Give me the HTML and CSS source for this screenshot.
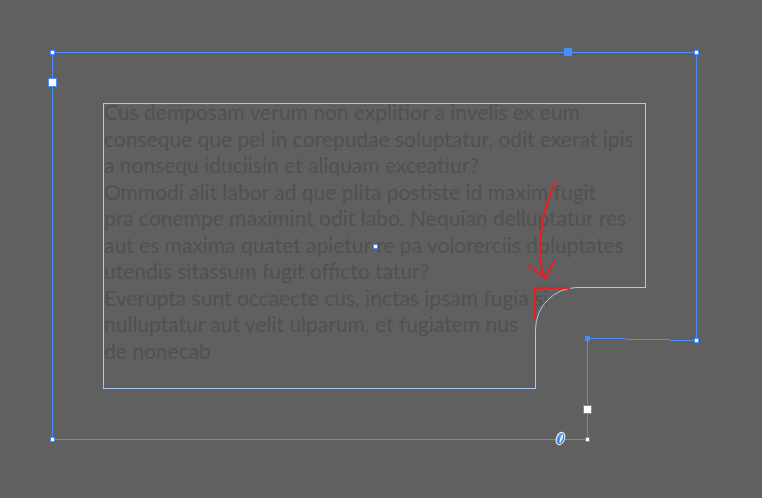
FILE: index.html
```html
<!DOCTYPE html>
<html>
<head>
<meta charset="utf-8">
<link rel="stylesheet" href="styles.css">
</head>
<body>
<div class="canvas">
  <div class="frame-text">
    <span class="ln">Cus demposam verum non explitior a invelis ex eum</span>
    <span class="ln">conseque que pel in corepudae soluptatur, odit exerat ipis</span>
    <span class="ln">a nonsequ iduciisin et aliquam exceatiur?</span>
    <span class="ln">Ommodi alit labor ad que plita postiste id maxim fugit</span>
    <span class="ln">pra conempe maximint odit labo. Nequian delluptatur res</span>
    <span class="ln">aut es maxima quatet apietur re pa volorerciis doluptates</span>
    <span class="ln">utendis sitassum fugit officto tatur?</span>
    <span class="ln">Everupta sunt occaecte cus, inctas ipsam fugia si</span>
    <span class="ln">nulluptatur aut velit ulparum, et fugiatem nus</span>
    <span class="ln">de nonecab</span>
  </div>
  <svg class="art" width="762" height="498" viewBox="0 0 762 498">
    <defs>
      <linearGradient id="ov" x1="0" y1="0" x2="1" y2="1">
        <stop offset="0" stop-color="#8fc0ff"/>
        <stop offset="0.5" stop-color="#2f7ff0"/>
        <stop offset="1" stop-color="#1a5fd0"/>
      </linearGradient>
    </defs>
    <g shape-rendering="crispEdges" fill="none" stroke="#a9c9f2" stroke-width="1">
      <path d="M577,287.5 H645.5 V103.5 H103.5 V388.5 H535.5 V330"/>
    </g>
    <path d="M577,287.5 A42,42 0 0 0 535.5,330" fill="none" stroke="#a9c9f2" stroke-width="1"/>
    <g shape-rendering="crispEdges" fill="none" stroke="#4a8df8" stroke-width="1">
      <path d="M52.5,439.5 V52.5 H696.5 V340.5"/>
      <path d="M587.5,338.5 H625.5 M625.5,339.5 H670 M670,340.5 H696.5"/>
      <path d="M587.5,338.5 V439.5 H52.5"/>
    </g>
    <g fill="#ffffff" stroke="#4a8df8" stroke-width="1" shape-rendering="crispEdges">
      <rect x="50.5" y="50.5" width="4" height="4"/>
      <rect x="694.5" y="50.5" width="4" height="4"/>
      <rect x="694.5" y="338.5" width="4" height="4"/>
      <rect x="585.5" y="437.5" width="4" height="4"/>
      <rect x="50.5" y="437.5" width="4" height="4"/>
      <rect x="373.5" y="244.5" width="4" height="4"/>
      <rect x="48.5" y="78.5" width="8" height="8"/>
      <rect x="583.5" y="405.5" width="8" height="8"/>
    </g>
    <g fill="#4a8df8" shape-rendering="crispEdges">
      <rect x="564" y="48" width="8" height="8"/>
      <rect x="585" y="336" width="5" height="5"/>
    </g>
    <g transform="translate(560.5,438.5) rotate(20)">
      <ellipse cx="0" cy="0" rx="4.6" ry="7" fill="#ffffff" opacity="0.85"/>
      <ellipse cx="0" cy="0" rx="3.4" ry="5.8" fill="url(#ov)"/>
      <ellipse cx="0.8" cy="0" rx="1.1" ry="4.4" fill="#ffffff" opacity="0.9"/>
    </g>
    <g fill="none" stroke="#ee1c1c" stroke-width="2" stroke-linecap="round" stroke-linejoin="round">
      <path d="M555,182 C548,200 543,210 541,232 C539,252 539,266 545,278"/>
      <path d="M529,266 C535,270 540,274 545,278 C548,272 552,266 554,261"/>
    </g>
    <g fill="none" stroke="#ee1c1c" stroke-width="2" shape-rendering="crispEdges">
      <path d="M535,319 V288 H570"/>
    </g>
  </svg>
</div>
</body>
</html>
```
FILE: styles.css
```css
html, body {
  margin: 0;
  padding: 0;
  background: #606060;
}
.canvas {
  position: relative;
  width: 762px;
  height: 498px;
  overflow: hidden;
  background: #606060;
}
.art {
  position: absolute;
  left: 0;
  top: 0;
}
.frame-text {
  position: absolute;
  left: 104px;
  top: 99px;
  display: flex;
  flex-direction: column;
  font-family: Lato, "Open Sans", sans-serif;
  font-size: 21px;
  line-height: 26.5px;
  letter-spacing: 0;
  color: #515151;
}
.ln {
  white-space: nowrap;
}
```
